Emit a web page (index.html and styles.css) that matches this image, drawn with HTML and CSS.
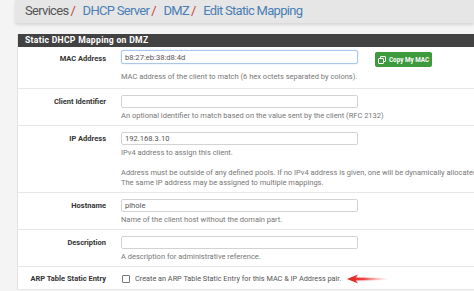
FILE: index.html
```html
<!DOCTYPE html>
<html lang="en">
<head>
    <meta charset="UTF-8">
    <title>Services / DHCP Server / DMZ / Edit Static Mapping</title>
    <link rel="stylesheet" href="styles.css">
</head>
<body>
    <div class="crumbs">
        <span class="here">Services</span><span class="sep">/</span>
        <a href="#">DHCP Server</a><span class="sep">/</span>
        <a href="#">DMZ</a><span class="sep">/</span>
        <a href="#">Edit Static Mapping</a>
    </div>

    <div class="panel">
        <div class="panel-title">Static DHCP Mapping on DMZ</div>

        <div class="row row-mac">
            <label class="lbl">MAC Address</label>
            <div class="field">
                <div class="inline">
                    <input type="text" class="txt focus" value="b8:27:eb:38:d8:4d">
                    <button class="btn-copy">
                        <svg width="8" height="8" viewBox="0 0 16 16">
                            <rect x="5" y="1" width="10" height="10" rx="1" fill="none" stroke="#fff" stroke-width="2"/>
                            <rect x="1" y="5" width="10" height="10" rx="1" fill="#3d9a3d" stroke="#fff" stroke-width="2"/>
                        </svg>
                        Copy My MAC
                    </button>
                </div>
                <div class="help">MAC address of the client to match (6 hex octets separated by colons).</div>
            </div>
        </div>

        <div class="row">
            <label class="lbl">Client Identifier</label>
            <div class="field">
                <input type="text" class="txt">
                <div class="help">An optional identifier to match based on the value sent by the client (RFC 2132)</div>
            </div>
        </div>

        <div class="row">
            <label class="lbl">IP Address</label>
            <div class="field">
                <input type="text" class="txt" value="192.168.3.10">
                <div class="help">IPv4 address to assign this client.</div>
                <div class="help para">Address must be outside of any defined pools. If no IPv4 address is given, one will be dynamically allocated from the pool.<br>The same IP address may be assigned to multiple mappings.</div>
            </div>
        </div>

        <div class="row">
            <label class="lbl">Hostname</label>
            <div class="field">
                <input type="text" class="txt" value="pihole">
                <div class="help">Name of the client host without the domain part.</div>
            </div>
        </div>

        <div class="row">
            <label class="lbl">Description</label>
            <div class="field">
                <input type="text" class="txt">
                <div class="help">A description for administrative reference.</div>
            </div>
        </div>

        <div class="row row-check">
            <label class="lbl">ARP Table Static Entry</label>
            <div class="field">
                <label class="check"><span class="box"></span>Create an ARP Table Static Entry for this MAC &amp; IP Address pair.</label>
                <svg class="arrow" width="42" height="10" viewBox="0 0 42 10">
                    <defs>
                        <linearGradient id="tail" x1="0" x2="1" y1="0" y2="0">
                            <stop offset="0" stop-color="#e3211c"/>
                            <stop offset="0.4" stop-color="#ec4540"/>
                            <stop offset="1" stop-color="#f6b3ae" stop-opacity="0"/>
                        </linearGradient>
                    </defs>
                    <path d="M0 5 L11 0.5 L9 3.4 L42 4 L42 6 L9 6.6 L11 9.5 Z" fill="url(#tail)"/>
                </svg>
            </div>
        </div>
    </div>
</body>
</html>
```

FILE: styles.css
```css
html, body {
    margin: 0;
    padding: 0;
}
body {
    font-family: Roboto, "Liberation Sans", Arial, sans-serif;
    background-color: #f4f4f4;
    width: 474px;
    height: 291px;
    overflow: hidden;
}
.crumbs {
    margin-left: 15px;
    height: 23px;
    padding-left: 10px;
    background-color: #e6e6e6;
    box-shadow: 0 2px 3px rgba(0, 0, 0, 0.12);
    border-bottom-left-radius: 3px;
    font-size: 13px;
    letter-spacing: -0.7px;
    line-height: 21px;
    color: #555;
    white-space: nowrap;
}
.crumbs a {
    color: #4a7eb4;
    text-decoration: none;
}
.crumbs .sep {
    color: #c8433a;
    margin: 0 5px 0 2px;
}
.panel {
    margin: 11px 0 0 17px;
    background-color: #fff;
    border-left: 1px solid #e2e2e2;
}
.panel-title {
    background-color: #424242;
    color: #fff;
    font-size: 8.6px;
    font-weight: bold;
    letter-spacing: 0.3px;
    height: 13px;
    line-height: 13px;
    padding-left: 7px;
}
.row {
    display: flex;
    border-bottom: 1px solid #e7e7e7;
    padding: 6px 0 4px;
}
.lbl {
    width: 88px;
    flex: none;
    text-align: right;
    font-size: 7.5px;
    font-weight: bold;
    color: #333;
    line-height: 14px;
}
.field {
    margin-left: 15px;
    flex: 1;
    position: relative;
}
.inline {
    display: flex;
    align-items: flex-start;
}
.txt {
    display: block;
    box-sizing: border-box;
    width: 237px;
    height: 13px;
    margin: 0;
    padding: 0 3px;
    border: 1px solid #d2d2d2;
    border-radius: 2px;
    font-family: inherit;
    font-size: 7.6px;
    color: #555;
    background: #fff;
}
.txt.focus {
    height: 14px;
    border-color: #a9c7e6;
    box-shadow: 0 0 2px rgba(102, 160, 220, 0.35);
}
.btn-copy {
    margin: 2px 0 0 17px;
    height: 15px;
    padding: 0 3px;
    border: none;
    border-radius: 2px;
    background-color: #3d9a3d;
    color: #fff;
    font-family: inherit;
    font-size: 6.3px;
    font-weight: bold;
    display: flex;
    align-items: center;
    gap: 3px;
}
.help {
    font-size: 7.5px;
    color: #777;
    line-height: 10px;
    margin-top: 3px;
    white-space: nowrap;
}
.help.para {
    margin-top: 10px;
}
.row-mac {
    padding: 3px 0 6px;
}
.row-mac .lbl {
    line-height: 17px;
}
.row-mac .help {
    margin-top: 5px;
}
.row-check {
    padding: 7px 0 5px;
}
.row-check .lbl {
    line-height: 10px;
}
.check {
    display: flex;
    align-items: center;
    font-size: 7.3px;
    color: #555;
    line-height: 10px;
    white-space: nowrap;
}
.box {
    width: 6px;
    height: 6px;
    border: 1px solid #777;
    border-radius: 1px;
    margin: 0 5px 0 1px;
    background: #fff;
}
.arrow {
    position: absolute;
    left: 226px;
    top: 0;
}
```
